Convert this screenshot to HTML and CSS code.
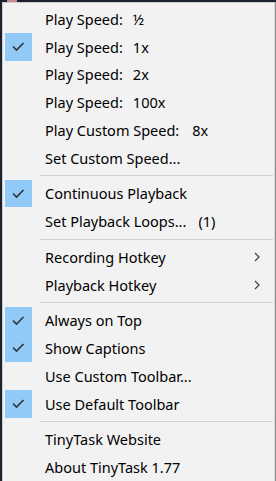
FILE: index.html
```html
<!DOCTYPE html>
<html lang="en">

<head>
    <meta charset="UTF-8">
    <title>TinyTask menu</title>
    <link rel="stylesheet" href="styles.css">
</head>

<body>
    <div class="backdrop">
        <span class="glow"></span>
    </div>
    <ul class="menu">
        <li class="item"><span class="check"></span><span class="label">Play Speed:<span class="val">½</span></span></li>
        <li class="item"><span class="check on"><svg viewBox="0 0 27 28"><path d="M8 13.5 L11.5 17 L18.5 10"/></svg></span><span class="label">Play Speed:<span class="val">1x</span></span></li>
        <li class="item"><span class="check"></span><span class="label">Play Speed:<span class="val">2x</span></span></li>
        <li class="item"><span class="check"></span><span class="label">Play Speed:<span class="val">100x</span></span></li>
        <li class="item"><span class="check"></span><span class="label">Play Custom Speed:<span class="val wide">8x</span></span></li>
        <li class="item"><span class="check"></span><span class="label">Set Custom Speed...</span></li>
        <li class="sep"></li>
        <li class="item"><span class="check on"><svg viewBox="0 0 27 28"><path d="M8 13.5 L11.5 17 L18.5 10"/></svg></span><span class="label">Continuous Playback</span></li>
        <li class="item"><span class="check"></span><span class="label">Set Playback Loops...<span class="val loops">(1)</span></span></li>
        <li class="sep"></li>
        <li class="item"><span class="check"></span><span class="label">Recording Hotkey</span><svg class="arrow" viewBox="0 0 6 10"><path d="M1 1 L5 5 L1 9"/></svg></li>
        <li class="item"><span class="check"></span><span class="label">Playback Hotkey</span><svg class="arrow" viewBox="0 0 6 10"><path d="M1 1 L5 5 L1 9"/></svg></li>
        <li class="sep"></li>
        <li class="item"><span class="check on"><svg viewBox="0 0 27 28"><path d="M8 13.5 L11.5 17 L18.5 10"/></svg></span><span class="label">Always on Top</span></li>
        <li class="item"><span class="check on"><svg viewBox="0 0 27 28"><path d="M8 13.5 L11.5 17 L18.5 10"/></svg></span><span class="label">Show Captions</span></li>
        <li class="item"><span class="check"></span><span class="label">Use Custom Toolbar...</span></li>
        <li class="item"><span class="check on"><svg viewBox="0 0 27 28"><path d="M8 13.5 L11.5 17 L18.5 10"/></svg></span><span class="label">Use Default Toolbar</span></li>
        <li class="sep"></li>
        <li class="item"><span class="check"></span><span class="label">TinyTask Website</span></li>
        <li class="item"><span class="check"></span><span class="label">About TinyTask 1.77</span></li>
    </ul>
</body>

</html>
```

FILE: styles.css
```css
html,
body {
    margin: 0;
    padding: 0;
}

body {
    width: 276px;
    height: 481px;
    overflow: hidden;
    background: #1c2130;
    font-family: "Noto Sans", "Liberation Sans", sans-serif;
    font-size: 14.5px;
}

.backdrop {
    height: 2px;
    display: flex;
}

.glow {
    width: 10px;
    margin-left: 7px;
    background: #c98a93;
}

.menu {
    list-style: none;
    margin: 0 0 0 2px;
    padding: 2px 0;
    width: 271px;
    border: 1px solid #cccccc;
    border-right-color: #d9d9d9;
    background: #f2f2f2;
    box-shadow: 1px 0 0 #8f8f8f;
}

.item {
    height: 27.75px;
    display: flex;
    align-items: center;
    color: #000;
}

.check {
    width: 27px;
    height: 100%;
    margin: 0 13px 0 2px;
    flex: none;
}

.check.on {
    background: #91c9f7;
}

.check svg {
    display: block;
    width: 27px;
    height: 28px;
    fill: none;
    stroke: #333;
    stroke-width: 1.6;
}

.label {
    white-space: nowrap;
    flex: 1;
}

.val {
    margin-left: 10px;
}

.val.wide {
    margin-left: 13px;
}

.val.loops {
    margin-left: 12px;
}

.arrow {
    width: 6px;
    height: 10px;
    margin-right: 14px;
    fill: none;
    stroke: #444;
    stroke-width: 1.2;
}

.sep {
    height: 8px;
    display: flex;
    align-items: center;
    margin: 0 1px 0 37px;
}

.sep::before {
    content: "";
    flex: 1;
    height: 1px;
    background: #d0d0d0;
}
```
